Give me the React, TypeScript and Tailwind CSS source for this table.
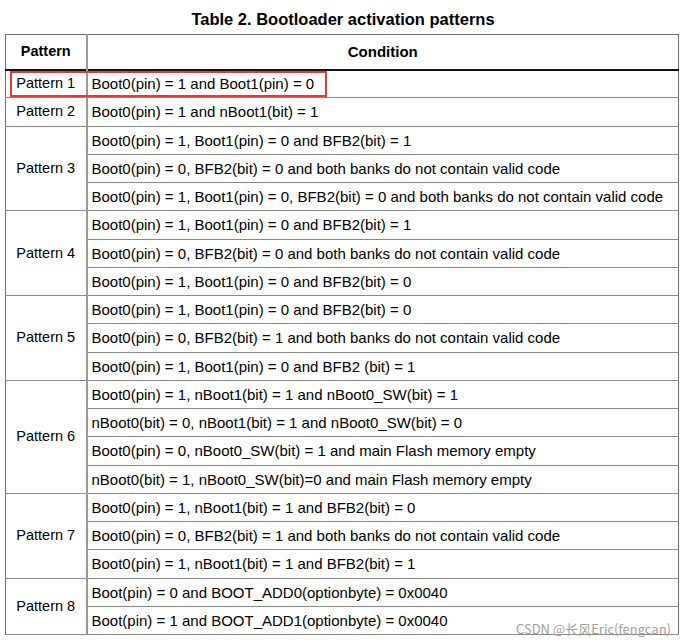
const groups: { label: string; rows: string[] }[] = [
  { label: "Pattern 1", rows: ["Boot0(pin) = 1 and Boot1(pin) = 0"] },
  { label: "Pattern 2", rows: ["Boot0(pin) = 1 and nBoot1(bit) = 1"] },
  {
    label: "Pattern 3",
    rows: [
      "Boot0(pin) = 1, Boot1(pin) = 0 and BFB2(bit) = 1",
      "Boot0(pin) = 0, BFB2(bit) = 0 and both banks do not contain valid code",
      "Boot0(pin) = 1, Boot1(pin) = 0, BFB2(bit) = 0 and both banks do not contain valid code",
    ],
  },
  {
    label: "Pattern 4",
    rows: [
      "Boot0(pin) = 1, Boot1(pin) = 0 and BFB2(bit) = 1",
      "Boot0(pin) = 0, BFB2(bit) = 0 and both banks do not contain valid code",
      "Boot0(pin) = 1, Boot1(pin) = 0 and BFB2(bit) = 0",
    ],
  },
  {
    label: "Pattern 5",
    rows: [
      "Boot0(pin) = 1, Boot1(pin) = 0 and BFB2(bit) = 0",
      "Boot0(pin) = 0, BFB2(bit) = 1 and both banks do not contain valid code",
      "Boot0(pin) = 1, Boot1(pin) = 0 and BFB2 (bit) = 1",
    ],
  },
  {
    label: "Pattern 6",
    rows: [
      "Boot0(pin) = 1, nBoot1(bit) = 1 and nBoot0_SW(bit) = 1",
      "nBoot0(bit) = 0, nBoot1(bit) = 1 and nBoot0_SW(bit) = 0",
      "Boot0(pin) = 0, nBoot0_SW(bit) = 1 and main Flash memory empty",
      "nBoot0(bit) = 1, nBoot0_SW(bit)=0 and main Flash memory empty",
    ],
  },
  {
    label: "Pattern 7",
    rows: [
      "Boot0(pin) = 1, nBoot1(bit) = 1 and BFB2(bit) = 0",
      "Boot0(pin) = 0, BFB2(bit) = 1 and both banks do not contain valid code",
      "Boot0(pin) = 1, nBoot1(bit) = 1 and BFB2(bit) = 1",
    ],
  },
  {
    label: "Pattern 8",
    rows: [
      "Boot(pin) = 0 and BOOT_ADD0(optionbyte) = 0x0040",
      "Boot(pin) = 1 and BOOT_ADD1(optionbyte) = 0x0040",
    ],
  },
];

export default function App() {
  return (
    <div className="relative w-[686px] h-[644px] bg-white text-black font-['Liberation_Sans',Arial,sans-serif]">
      <h1 className="pt-[10px] h-[34px] text-center text-[16.5px] font-bold leading-[19px]">
        Table 2. Bootloader activation patterns
      </h1>
      <table className="ml-[5px] w-[674px] border-collapse border border-[#6f6f6f] text-[15px] leading-[17px]">
        <thead>
          <tr className="h-[35px] border-b-2 border-b-[#111]">
            <th className="w-[81px] border-r-2 border-r-[#999] font-bold text-center text-[14.5px]">Pattern</th>
            <th className="font-bold text-center">Condition</th>
          </tr>
        </thead>
        <tbody>
          {groups.map((g, gi) =>
            g.rows.map((row, ri) => (
              <tr key={`${gi}-${ri}`} className="h-[28.25px] border-b border-b-[#8a8a8a]">
                {ri === 0 && (
                  <td rowSpan={g.rows.length} className="border-r-2 border-r-[#999] text-center text-[14.5px] p-0">
                    {g.label}
                  </td>
                )}
                <td className="pl-[4px] p-0 whitespace-nowrap">{row}</td>
              </tr>
            ))
          )}
        </tbody>
      </table>
      <div className="absolute left-[10px] top-[71px] w-[317px] h-[26px] border-2 border-[#e53935]" />
      <div className="absolute right-[15px] top-[619px] text-[13px] text-[#a0a0a0] font-['Noto_Sans_CJK_SC','Liberation_Sans',sans-serif]">
        CSDN @长风Eric(fengcan)
      </div>
    </div>
  );
}
